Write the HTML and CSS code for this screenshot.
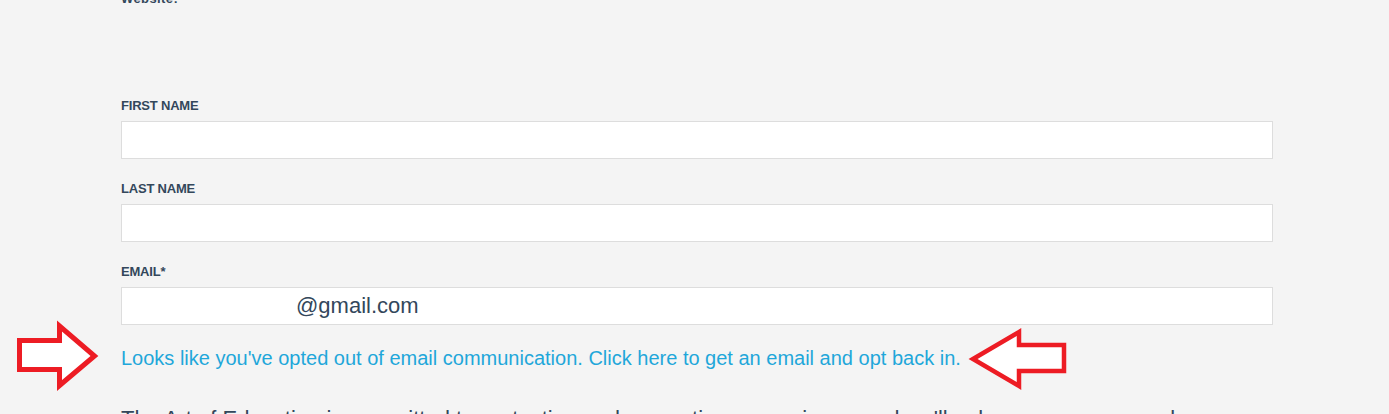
FILE: index.html
```html
<!DOCTYPE html>
<html lang="en">
<head>
<meta charset="utf-8">
<title>Subscription form</title>
<link rel="stylesheet" href="styles.css">
</head>
<body>
<div class="page">
  <form class="form">
    <label class="label label-top">Website:</label>

    <div class="field">
      <label class="label">FIRST NAME</label>
      <div class="input"></div>
    </div>
    <div class="field">
      <label class="label">LAST NAME</label>
      <div class="input"></div>
    </div>
    <div class="field">
      <label class="label">EMAIL*</label>
      <div class="input"><span class="email-value">@gmail.com</span></div>
    </div>

    <a class="optout" href="#">Looks like you've opted out of email communication. Click here to get an email and opt back in.</a>

    <p class="legal">The Art of Education is committed to protecting and respecting your privacy, and we'll only use your personal information to administer your account and to provide the products and services you requested from us.</p>
  </form>

  <svg class="annotations" width="1389" height="414" viewBox="0 0 1389 414" aria-hidden="true">
    <polygon points="19.5,340.5 59.5,340.5 59.5,326 94.5,356 59.5,385.5 59.5,369.5 19.5,369.5" fill="#ffffff" stroke="#ed1c24" stroke-width="5" stroke-linejoin="miter"/>
    <polygon points="973,359 1019,332 1019,345 1064,345 1064,371 1019,371 1019,386" fill="#ffffff" stroke="#ed1c24" stroke-width="4.5" stroke-linejoin="miter"/>
  </svg>
</div>
</body>
</html>
```

FILE: styles.css
```css
html, body {
  margin: 0;
  padding: 0;
  background: #f4f4f4;
  overflow: hidden;
}

.page {
  position: relative;
  width: 1389px;
  height: 414px;
  overflow: hidden;
}

.form {
  display: flex;
  flex-direction: column;
  padding-left: 121px;
  width: 1152px;
  font-family: "Liberation Sans", Arial, Helvetica, sans-serif;
}

.label {
  display: block;
  font-size: 13px;
  line-height: 16px;
  font-weight: bold;
  color: #33475b;
  letter-spacing: -0.2px;
}

.label-top {
  margin-top: -9px;
  margin-bottom: 91px;
  letter-spacing: 0.4px;
}

.field {
  display: flex;
  flex-direction: column;
  gap: 7px;
  margin-bottom: 22px;
}

.input {
  box-sizing: border-box;
  height: 38px;
  width: 1152px;
  background: #ffffff;
  border: 1px solid #dddddd;
  display: flex;
  align-items: center;
}

.email-value {
  padding-left: 174px;
  font-size: 22px;
  color: #33475b;
  line-height: 26px;
}

.optout {
  margin-top: -1px;
  font-size: 20px;
  line-height: 24px;
  color: #1fa7da;
  text-decoration: none;
  white-space: nowrap;
}

.legal {
  margin: 34px 0 0 0;
  width: 1152px;
  font-size: 22px;
  line-height: 30px;
  color: #33475b;
}

.annotations {
  position: absolute;
  left: 0;
  top: 0;
  pointer-events: none;
}
```
